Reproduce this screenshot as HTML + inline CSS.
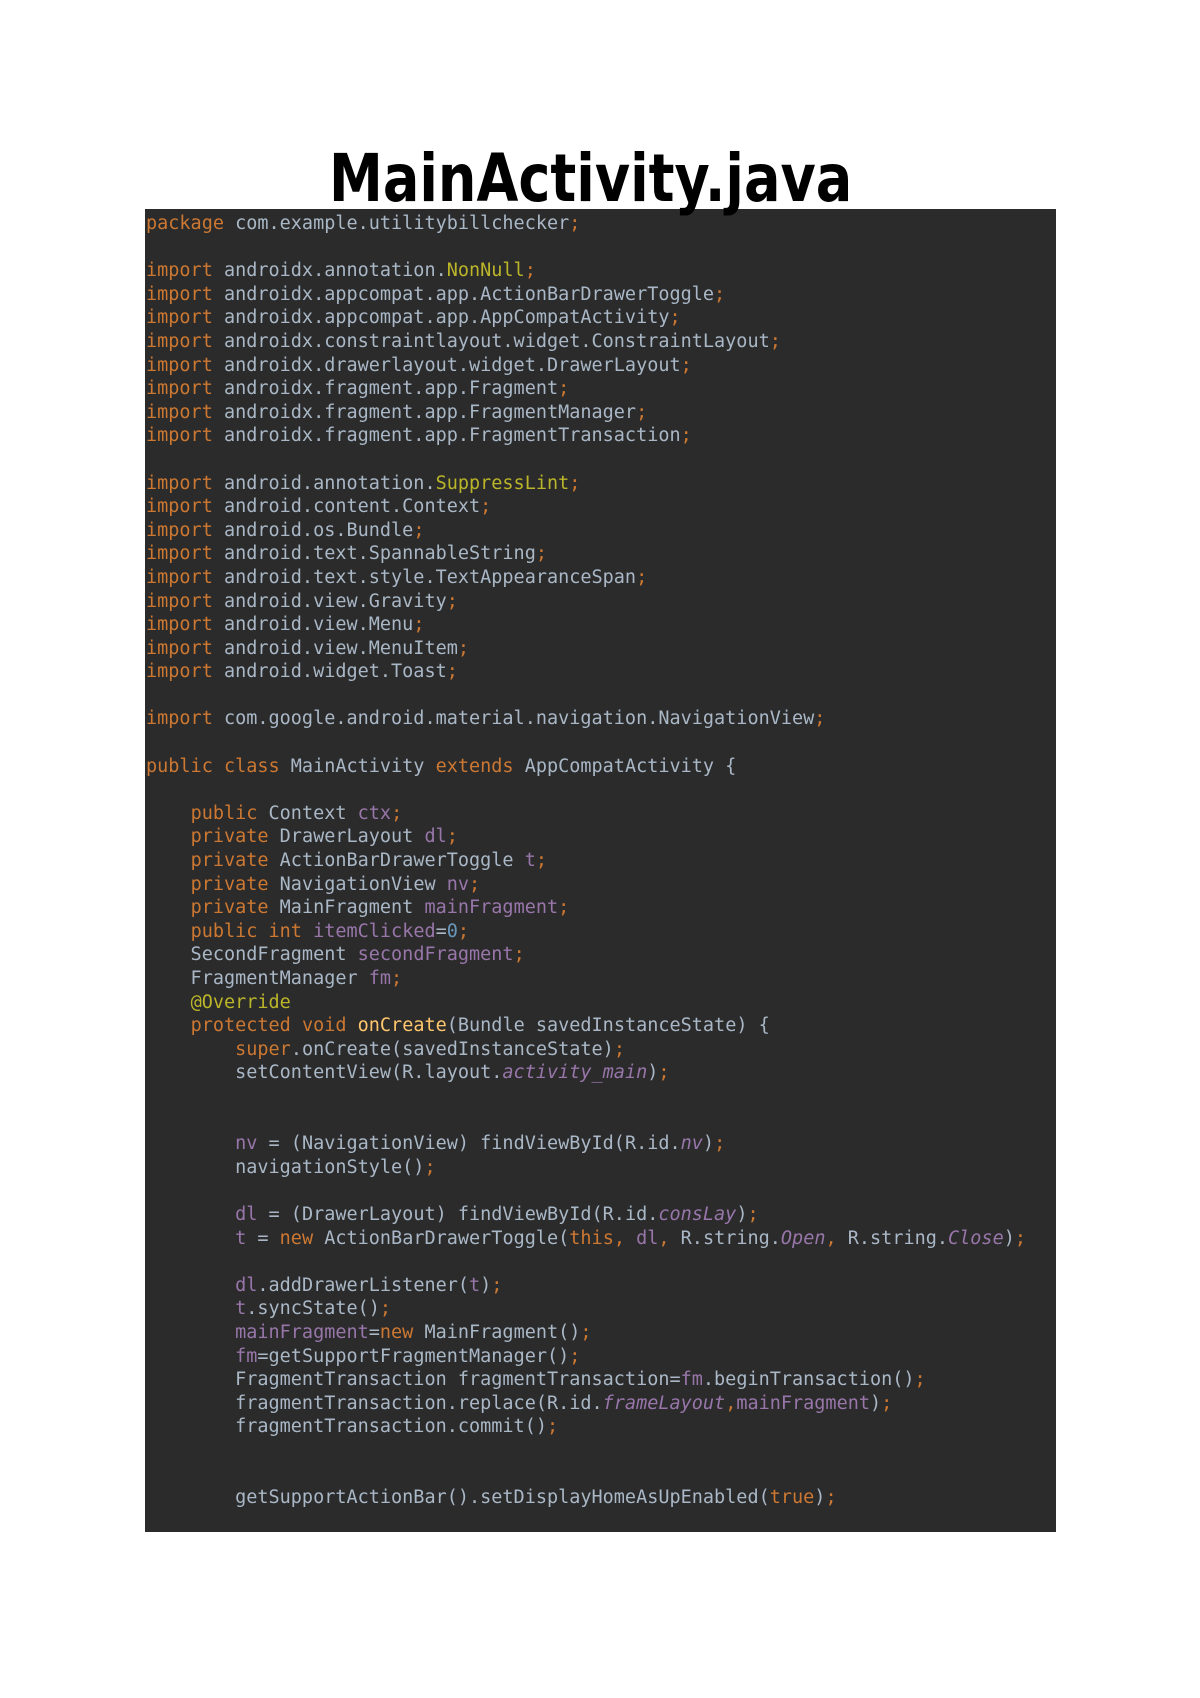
<!DOCTYPE html>
<html><head><meta charset="utf-8"><style>
html,body{margin:0;padding:0;background:#fff;width:1200px;height:1698px;overflow:hidden}
.t{position:absolute;z-index:2;left:329px;top:139px;font:bold 66px "DejaVu Sans",sans-serif;color:#000;transform:scaleX(0.82);transform-origin:0 0;white-space:nowrap;line-height:80px}
.box{position:absolute;z-index:1;left:145px;top:209px;width:911px;height:1323px;background:#2b2b2b}
pre{position:absolute;z-index:3;left:146px;top:212px;margin:0;font:18.5px/23.6px "DejaVu Sans Mono","Liberation Mono",monospace;color:#a9b7c6}
.k{color:#cc7832}.p{color:#9876aa}.i{color:#9876aa;font-style:italic}.n{color:#6897bb}.a{color:#bbb529}.m{color:#ffc66d}
</style></head><body>
<div class="t">MainActivity.java</div>
<div class="box"></div>
<pre><span class="k">package</span> com.example.utilitybillchecker<span class="k">;</span>

<span class="k">import</span> androidx.annotation.<span class="a">NonNull</span><span class="k">;</span>
<span class="k">import</span> androidx.appcompat.app.ActionBarDrawerToggle<span class="k">;</span>
<span class="k">import</span> androidx.appcompat.app.AppCompatActivity<span class="k">;</span>
<span class="k">import</span> androidx.constraintlayout.widget.ConstraintLayout<span class="k">;</span>
<span class="k">import</span> androidx.drawerlayout.widget.DrawerLayout<span class="k">;</span>
<span class="k">import</span> androidx.fragment.app.Fragment<span class="k">;</span>
<span class="k">import</span> androidx.fragment.app.FragmentManager<span class="k">;</span>
<span class="k">import</span> androidx.fragment.app.FragmentTransaction<span class="k">;</span>

<span class="k">import</span> android.annotation.<span class="a">SuppressLint</span><span class="k">;</span>
<span class="k">import</span> android.content.Context<span class="k">;</span>
<span class="k">import</span> android.os.Bundle<span class="k">;</span>
<span class="k">import</span> android.text.SpannableString<span class="k">;</span>
<span class="k">import</span> android.text.style.TextAppearanceSpan<span class="k">;</span>
<span class="k">import</span> android.view.Gravity<span class="k">;</span>
<span class="k">import</span> android.view.Menu<span class="k">;</span>
<span class="k">import</span> android.view.MenuItem<span class="k">;</span>
<span class="k">import</span> android.widget.Toast<span class="k">;</span>

<span class="k">import</span> com.google.android.material.navigation.NavigationView<span class="k">;</span>

<span class="k">public class</span> MainActivity <span class="k">extends</span> AppCompatActivity {

    <span class="k">public</span> Context <span class="p">ctx</span><span class="k">;</span>
    <span class="k">private</span> DrawerLayout <span class="p">dl</span><span class="k">;</span>
    <span class="k">private</span> ActionBarDrawerToggle <span class="p">t</span><span class="k">;</span>
    <span class="k">private</span> NavigationView <span class="p">nv</span><span class="k">;</span>
    <span class="k">private</span> MainFragment <span class="p">mainFragment</span><span class="k">;</span>
    <span class="k">public int</span> <span class="p">itemClicked</span>=<span class="n">0</span><span class="k">;</span>
    SecondFragment <span class="p">secondFragment</span><span class="k">;</span>
    FragmentManager <span class="p">fm</span><span class="k">;</span>
    <span class="a">@Override</span>
    <span class="k">protected void</span> <span class="m">onCreate</span>(Bundle savedInstanceState) {
        <span class="k">super</span>.onCreate(savedInstanceState)<span class="k">;</span>
        setContentView(R.layout.<span class="i">activity_main</span>)<span class="k">;</span>


        <span class="p">nv</span> = (NavigationView) findViewById(R.id.<span class="i">nv</span>)<span class="k">;</span>
        navigationStyle()<span class="k">;</span>

        <span class="p">dl</span> = (DrawerLayout) findViewById(R.id.<span class="i">consLay</span>)<span class="k">;</span>
        <span class="p">t</span> = <span class="k">new</span> ActionBarDrawerToggle(<span class="k">this, </span><span class="p">dl</span><span class="k">, </span>R.string.<span class="i">Open</span><span class="k">, </span>R.string.<span class="i">Close</span>)<span class="k">;</span>

        <span class="p">dl</span>.addDrawerListener(<span class="p">t</span>)<span class="k">;</span>
        <span class="p">t</span>.syncState()<span class="k">;</span>
        <span class="p">mainFragment</span>=<span class="k">new</span> MainFragment()<span class="k">;</span>
        <span class="p">fm</span>=getSupportFragmentManager()<span class="k">;</span>
        FragmentTransaction fragmentTransaction=<span class="p">fm</span>.beginTransaction()<span class="k">;</span>
        fragmentTransaction.replace(R.id.<span class="i">frameLayout</span><span class="k">,</span><span class="p">mainFragment</span>)<span class="k">;</span>
        fragmentTransaction.commit()<span class="k">;</span>


        getSupportActionBar().setDisplayHomeAsUpEnabled(<span class="k">true</span>)<span class="k">;</span></pre>
</body></html>
